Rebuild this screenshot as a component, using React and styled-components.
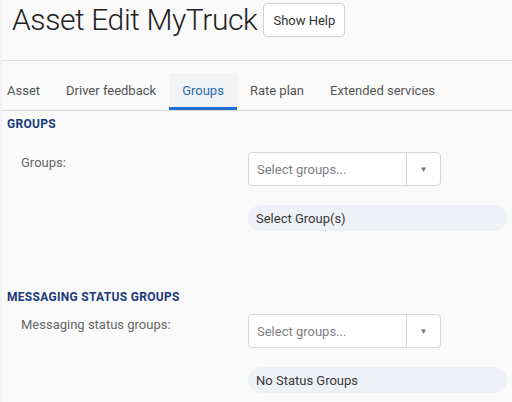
import React from "react";
import styled, { createGlobalStyle } from "styled-components";

const Global = createGlobalStyle`
  html, body { margin: 0; padding: 0; background: #fafafa; }
  body { font-family: Roboto, "Liberation Sans", Arial, sans-serif; color: #333; }
  * { box-sizing: border-box; }
`;

const Page = styled.div`
  width: 512px;
  height: 402px;
  overflow: hidden;
  background: #fafafa;
  border-left: 2px solid #f3f3f3;
`;

const Header = styled.header`
  display: flex;
  align-items: center;
  gap: 6px;
  height: 61px;
  padding: 0 0 20px 10px;
  border-bottom: 1px solid #dcdcdc;
`;

const Title = styled.h1`
  margin: 0;
  font-family: Roboto, sans-serif;
  font-weight: 300;
  font-size: 30px;
  line-height: 40px;
  color: #222;
  letter-spacing: -0.4px;
`;

const HelpButton = styled.button`
  height: 34px;
  padding: 0 9px;
  border: 1px solid #d2d2d2;
  border-radius: 4px;
  background: #fff;
  font-family: Roboto, sans-serif;
  font-size: 13px;
  color: #333;
`;

const Tabs = styled.nav`
  display: flex;
  padding-top: 12px;
  margin-left: -2px;
  border-bottom: 1px solid #d8d8d8;
`;

const Tab = styled.div`
  height: 37px;
  padding: 0 13px 0 ${p => p.$pl || 13}px;
  display: flex;
  align-items: center;
  font-size: 13px;
  color: ${p => (p.$active ? "#2a6db3" : "#555")};
  background: ${p => (p.$active ? "#f2f3f5" : "transparent")};
  border-bottom: 3px solid ${p => (p.$active ? "#1f70d0" : "transparent")};
`;

const Section = styled.section`
  padding: ${p => p.$pt}px 0 0 5px;
`;

const SectionTitle = styled.h2`
  margin: 0;
  font-size: 12px;
  font-weight: 700;
  line-height: 14px;
  color: #1b3a7c;
  letter-spacing: 0.3px;
`;

const FieldRow = styled.div`
  display: grid;
  grid-template-columns: 241px 260px;
  margin-top: ${p => p.$mt}px;
`;

const Label = styled.div`
  padding: 3px 0 0 14px;
  font-size: 13px;
  color: #666;
`;

const Controls = styled.div`
  display: flex;
  flex-direction: column;
  gap: 19px;
`;

const Select = styled.div`
  width: 193px;
  height: 34px;
  display: flex;
  background: #fff;
  border: 1px solid #d6d6d6;
  border-radius: 4px;
`;

const Placeholder = styled.div`
  flex: 1;
  display: flex;
  align-items: center;
  padding-left: 8px;
  font-size: 13px;
  color: #808080;
  border-right: 1px solid #d6d6d6;
`;

const Arrow = styled.div`
  width: 33px;
  display: flex;
  align-items: center;
  justify-content: center;
  color: #6b7280;
  font-size: 8px;
`;

const Pill = styled.div`
  width: 259px;
  height: 26px;
  display: flex;
  align-items: center;
  padding-left: 8px;
  border-radius: 13px;
  background: #eef1f5;
  font-size: 13px;
  color: #383838;
`;

function Field({ label, value, mt }) {
  return (
    <FieldRow $mt={mt}>
      <Label>{label}</Label>
      <Controls>
        <Select>
          <Placeholder>Select groups...</Placeholder>
          <Arrow>▼</Arrow>
        </Select>
        <Pill>{value}</Pill>
      </Controls>
    </FieldRow>
  );
}

export default function App() {
  return (
    <Page>
      <Global />
      <Header>
        <Title>Asset Edit MyTruck</Title>
        <HelpButton>Show Help</HelpButton>
      </Header>
      <Tabs>
        <Tab $pl={7}>Asset</Tab>
        <Tab>Driver feedback</Tab>
        <Tab $active>Groups</Tab>
        <Tab>Rate plan</Tab>
        <Tab>Extended services</Tab>
      </Tabs>
      <Section $pt={6}>
        <SectionTitle>GROUPS</SectionTitle>
        <Field mt={21} label="Groups:" value="Select Group(s)" />
      </Section>
      <Section $pt={59}>
        <SectionTitle>MESSAGING STATUS GROUPS</SectionTitle>
        <Field mt={10} label="Messaging status groups:" value="No Status Groups" />
      </Section>
    </Page>
  );
}
